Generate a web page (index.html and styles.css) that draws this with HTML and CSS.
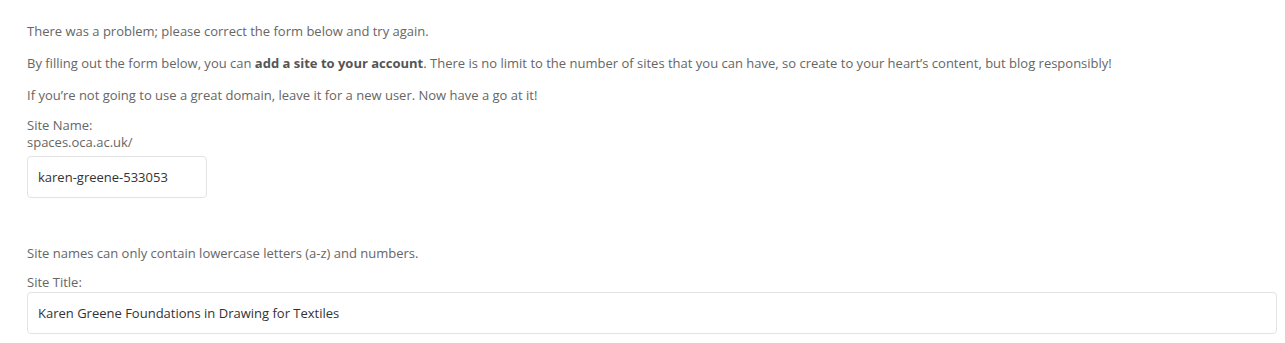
FILE: index.html
```html
<!DOCTYPE html>
<html>
<head>
<meta charset="utf-8">
<link rel="stylesheet" href="styles.css">
</head>
<body>
<div class="page">
  <p class="msg">There was a problem; please correct the form below and try again.</p>
  <p class="msg">By filling out the form below, you can <strong>add a site to your account</strong>. There is no limit to the number of sites that you can have, so create to your heart’s content, but blog responsibly!</p>
  <p class="msg">If you’re not going to use a great domain, leave it for a new user. Now have a go at it!</p>
  <div class="field">
    <label class="label">Site Name:</label>
    <span class="prefix">spaces.oca.ac.uk/</span>
    <div class="input input-short">karen-greene-533053</div>
  </div>
  <p class="msg hint">Site names can only contain lowercase letters (a-z) and numbers.</p>
  <div class="field">
    <label class="label">Site Title:</label>
    <div class="input input-wide">Karen Greene Foundations in Drawing for Textiles</div>
  </div>
</div>
</body>
</html>
```
FILE: styles.css
```css
html, body {
  margin: 0;
  padding: 0;
  background: #ffffff;
}
body {
  font-family: "Open Sans", "Liberation Sans", sans-serif;
  font-size: 13px;
  color: #666666;
}
.page {
  padding: 9px 8px 0 27px;
}
.msg {
  margin: 12px 0;
  line-height: 20px;
}
.msg strong {
  font-weight: 700;
  color: #555555;
}
.field {
  display: flex;
  flex-direction: column;
  align-items: flex-start;
}
.label, .prefix {
  display: block;
  line-height: 17px;
}
.input {
  box-sizing: border-box;
  height: 42px;
  border: 1px solid #e3e3e3;
  border-radius: 4px;
  padding: 0 10px;
  display: flex;
  align-items: center;
  color: #333333;
  font-size: 13px;
}
.input-short {
  width: 180px;
  margin-top: 5px;
}
.input-wide {
  width: 1250px;
  margin-top: 1px;
}
.hint {
  margin-top: 45px;
  margin-bottom: 11px;
}
```
